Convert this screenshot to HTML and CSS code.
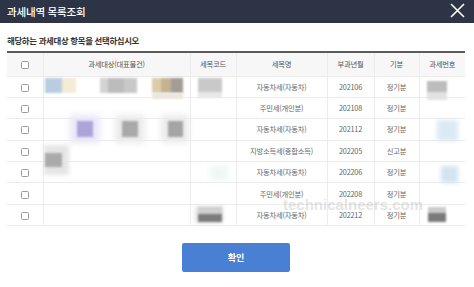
FILE: index.html
```html
<!DOCTYPE html>
<html lang="ko">
<head>
  <meta charset="UTF-8">
  <title>과세내역 목록조회</title>
  <link rel="stylesheet" href="styles.css">
</head>
<body>

<div class="popup">
  <div class="popup-head">
    <h1>과세내역 목록조회</h1>
    <a href="javascript:void(0);" class="close">
      <svg width="15" height="15" viewBox="0 0 15 15"><path d="M1 1L14 14M14 1L1 14" stroke="#fff" stroke-width="1.6"/></svg>
    </a>
  </div>

  <div class="popup-body">
    <p class="guide">해당하는 과세대상 항목을 선택하십시오</p>
    <table class="list">
      <colgroup>
        <col class="c-chk">
        <col class="c-obj">
        <col class="c-code">
        <col class="c-name">
        <col class="c-ym">
        <col class="c-gb">
        <col class="c-no">
      </colgroup>
      <thead>
        <tr>
          <th><span class="chk"></span></th>
          <th>과세대상(대표물건)</th>
          <th>세목코드</th>
          <th>세목명</th>
          <th>부과년월</th>
          <th>기분</th>
          <th>과세번호</th>
        </tr>
      </thead>
      <tbody>
        <tr><td><span class="chk"></span></td><td></td><td></td><td>자동차세(자동차)</td><td>202106</td><td>정기분</td><td></td></tr>
        <tr><td><span class="chk"></span></td><td></td><td></td><td>주민세(개인분)</td><td>202108</td><td>정기분</td><td></td></tr>
        <tr><td><span class="chk"></span></td><td></td><td></td><td>자동차세(자동차)</td><td>202112</td><td>정기분</td><td></td></tr>
        <tr><td><span class="chk"></span></td><td></td><td></td><td>지방소득세(종합소득)</td><td>202205</td><td>신고분</td><td></td></tr>
        <tr><td><span class="chk"></span></td><td></td><td></td><td>자동차세(자동차)</td><td>202206</td><td>정기분</td><td></td></tr>
        <tr><td><span class="chk"></span></td><td></td><td></td><td>주민세(개인분)</td><td>202208</td><td>정기분</td><td></td></tr>
        <tr><td><span class="chk"></span></td><td></td><td></td><td>자동차세(자동차)</td><td>202212</td><td>정기분</td><td></td></tr>
      </tbody>
    </table>
    <div class="btns">
      <a href="javascript:void(0);" class="btn-ok">확인</a>
    </div>
  </div>

  <!-- 개인정보 모자이크 -->
  <div class="mosaic">
    <i class="m m1"></i>
    <i class="m m2"></i>
    <i class="m m3"></i>
    <i class="m m4"></i>
    <i class="m m5"></i>
    <i class="m m6"></i>
    <i class="m m7h"></i>
    <i class="m m7"></i>
    <i class="m m8h"></i>
    <i class="m m8"></i>
    <i class="m m9h"></i>
    <i class="m m9"></i>
    <i class="m m10h"></i>
    <i class="m m10"></i>
    <i class="m m11"></i>
    <i class="m m12"></i>
    <i class="m m13h"></i>
    <i class="m m13"></i>
    <i class="m m14"></i>
    <i class="m m15"></i>
  </div>

  <div class="watermark">technicalneers.com</div>
</div>

</body>
</html>
```

FILE: styles.css
```css
* {
  margin: 0;
  padding: 0;
  box-sizing: border-box;
}
body {
  background-color: #fff;
  font-family: "Noto Sans CJK KR", "Noto Sans", sans-serif;
}
.popup {
  width: 474px;
  height: 287px;
  position: relative;
  overflow: hidden;
}

/* 상단 타이틀 */
.popup-head {
  height: 23px;
  background-color: #2c3446;
  display: flex;
  align-items: center;
  justify-content: space-between;
  padding: 0 9px 0 7px;
}
.popup-head h1 {
  font-size: 10.5px;
  font-weight: 500;
  color: #fff;
  letter-spacing: -0.2px;
}
.close {
  display: flex;
  margin-top: -3px;
}

.popup-body {
  padding: 0 9px 0 7px;
}
.guide {
  margin: 12px 0 6px;
  font-size: 8.4px;
  line-height: 10px;
  font-weight: 700;
  color: #333;
  letter-spacing: -0.3px;
}

/* 목록 */
.list {
  width: 458px;
  table-layout: fixed;
  border-collapse: collapse;
  border-top: 2px solid #5b5b5b;
  border-bottom: 1px solid #e4e4e4;
}
.c-chk { width: 36px; }
.c-obj { width: 147px; }
.c-code { width: 46px; }
.c-name { width: 91px; }
.c-ym { width: 47px; }
.c-gb { width: 45px; }
.c-no { width: 46px; }

.list th,
.list td {
  text-align: center;
  vertical-align: middle;
  border-left: 1px solid #ececec;
  border-bottom: 1px solid #ececec;
  color: #666;
  font-weight: 400;
  font-size: 7.3px;
  letter-spacing: -0.2px;
  white-space: nowrap;
}
.list th:first-child,
.list td:first-child {
  border-left: 0;
}
.list th {
  height: 24px;
  background-color: #f7f7f7;
  color: #555;
}
.list td {
  height: 21.4px;
}
.chk {
  display: inline-block;
  width: 8px;
  height: 8px;
  border: 1px solid #9a9a9a;
  border-radius: 1.5px;
  background-color: #fff;
  vertical-align: middle;
}

/* 버튼 */
.btns {
  display: flex;
  justify-content: center;
  margin-top: 17px;
}
.btn-ok {
  width: 108px;
  height: 29px;
  line-height: 29px;
  text-align: center;
  background-color: #4a80d3;
  border-radius: 2px;
  color: #fff;
  font-size: 9px;
  font-weight: 700;
  text-decoration: none;
}

/* 모자이크 */
.m {
  position: absolute;
  filter: blur(1.2px);
}
.m1 { left: 45px; top: 78px; width: 31px; height: 15px;
  background: linear-gradient(to right, #b9cde2 0 17px, #f4ecd6 17px); }
.m2 { left: 100px; top: 78px; width: 37px; height: 15px;
  background: linear-gradient(to right, #d3d3d3 0 8px, #bcbcbc 8px 24px, #c8c8c8 24px); }
.m3 { left: 152px; top: 78px; width: 31px; height: 15px;
  background: linear-gradient(to right, #dccda9 0 9px, #c4b391 9px 19px, #a29c94 19px); }
.m4 { left: 152px; top: 93px; width: 31px; height: 6px; background-color: #ebe7e0; }
.m5 { left: 198px; top: 78px; width: 24px; height: 20px;
  background: linear-gradient(#c9c9c9 0 14px, #e8e8e8 14px); }
.m6 { left: 427px; top: 81px; width: 20px; height: 19px;
  background: linear-gradient(#bcbcbc 0 11px, #e2e2e2 11px); }
.m7h { left: 70px; top: 115px; width: 30px; height: 28px; background-color: #e9e7f7; filter: blur(3px); }
.m7 { left: 77px; top: 121px; width: 16px; height: 16px; background-color: #a9a5d8; }
.m8h { left: 115px; top: 115px; width: 30px; height: 28px; background-color: #ebebeb; filter: blur(3px); }
.m8 { left: 122px; top: 121px; width: 16px; height: 16px; background-color: #a9a9a9; }
.m9h { left: 161px; top: 115px; width: 28px; height: 28px; background-color: #ebebeb; filter: blur(3px); }
.m9 { left: 168px; top: 121px; width: 15px; height: 16px; background-color: #a5a5a5; }
.m10h { left: 44px; top: 145px; width: 25px; height: 30px; background-color: #e5e5e5; filter: blur(2px); }
.m10 { left: 45px; top: 153px; width: 17px; height: 14px; background-color: #ababab; }
.m11 { left: 437px; top: 120px; width: 21px; height: 21px; background-color: #dce9f5; filter: blur(2px); }
.m12 { left: 441px; top: 166px; width: 17px; height: 17px; background-color: #d3e3f1; filter: blur(2px); }
.m13h { left: 195px; top: 206px; width: 28px; height: 17px; background-color: #e4e4e4; filter: blur(2px); }
.m13 { left: 198px; top: 207px; width: 24px; height: 15px;
  background: linear-gradient(#cfcfcf 0 7px, #7c7c7c 7px); }
.m14 { left: 428px; top: 207px; width: 18px; height: 15px;
  background: linear-gradient(#cbcbcb 0 6px, #7a7a7a 6px); }
.m15 { left: 210px; top: 165px; width: 18px; height: 16px; background-color: #eef8f2; filter: blur(3px); }

.watermark {
  position: absolute;
  left: 283px;
  top: 196px;
  font-family: "Liberation Sans", Arial, sans-serif;
  font-size: 15px;
  font-weight: 700;
  color: rgba(160, 160, 160, 0.3);
  white-space: nowrap;
}
```
